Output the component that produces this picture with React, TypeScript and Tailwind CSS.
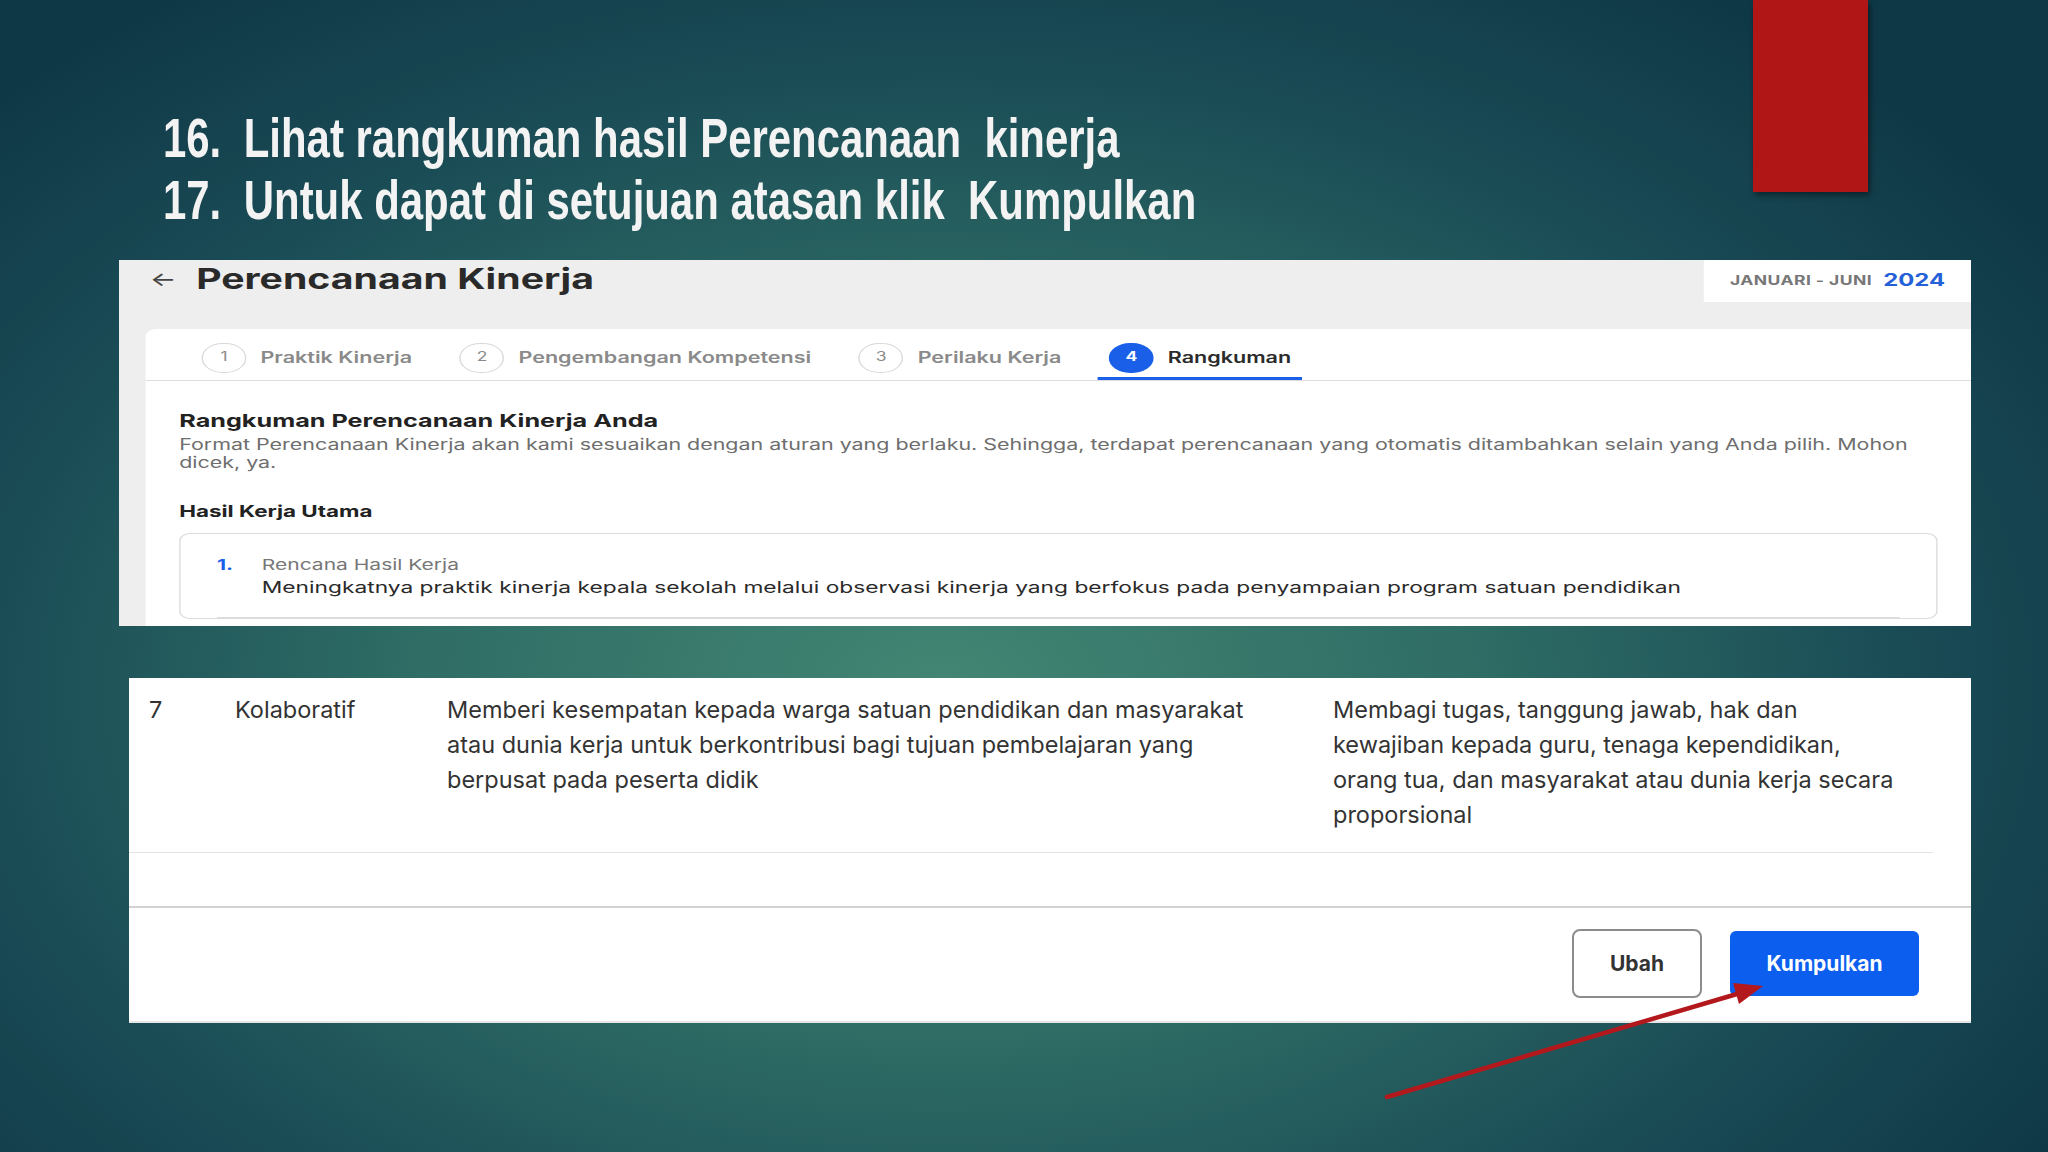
import React from 'react';

const tabs = [
  { n: '1', label: 'Praktik Kinerja' },
  { n: '2', label: 'Pengembangan Kompetensi' },
  { n: '3', label: 'Perilaku Kerja' },
  { n: '4', label: 'Rangkuman', active: true },
];

function StepTab({ n, label, active }: { n: string; label: string; active?: boolean }) {
  return (
    <div
      className={`flex h-full items-center gap-[10px] border-b-[3px] px-2 pt-[9px] ${
        active ? 'border-[#1a5fe8]' : 'border-transparent'
      }`}
    >
      <div
        className={`flex h-[30px] w-[32px] items-center justify-center rounded-full text-[12.5px] ${
          active
            ? 'bg-[#1a5fe8] font-bold text-white'
            : 'border border-[#d9d9d9] text-[#8a8a8a]'
        }`}
      >
        {n}
      </div>
      <span
        className={`text-[15.4px] font-semibold ${active ? 'text-[#2b2b2b]' : 'text-[#8a8a8a]'}`}
      >
        {label}
      </span>
    </div>
  );
}

function PlanningPanel() {
  return (
    <div className="ml-[119px] mt-[29px] h-[366px] w-[1852px] overflow-hidden bg-[#eeeeee]">
      {/* the screenshot is stretched sideways on the slide */}
      <div className="w-[1323px] origin-left scale-x-[1.4] font-['Inter',sans-serif]">
        <div className="flex h-[69px] items-start justify-between">
          <div className="flex h-[38px] items-center gap-[14px] pl-[22px]">
            <span className="text-[20px] leading-none text-[#444]">←</span>
            <h1 className="text-[28px] font-bold text-[#2a2a2a]">Perencanaan Kinerja</h1>
          </div>
          <div className="flex h-[42px] w-[191px] items-center justify-center gap-[8px] bg-white">
            <span className="text-[12.5px] font-bold tracking-wide text-[#777]">JANUARI - JUNI</span>
            <span className="text-[17px] font-bold text-[#2460d8]">2024</span>
          </div>
        </div>

        <div className="ml-[19px] h-[297px] rounded-tl-lg bg-white">
          <div className="flex h-[52px] items-stretch gap-[18px] border-b border-[#dddddd] pl-[32px]">
            {tabs.map((t) => (
              <StepTab key={t.n} {...t} />
            ))}
          </div>

          <div className="px-[24px] pt-[29px]">
            <h2 className="text-[18px] font-bold leading-[22px] text-[#222]">
              Rangkuman Perencanaan Kinerja Anda
            </h2>
            <p className="mt-[4px] text-[15.3px] leading-[18px] text-[#6e6e6e]">
              Format Perencanaan Kinerja akan kami sesuaikan dengan aturan yang berlaku. Sehingga,
              terdapat perencanaan yang otomatis ditambahkan selain yang Anda pilih. Mohon dicek, ya.
            </p>
            <h3 className="mt-[29px] text-[16px] font-bold leading-[20px] text-[#222]">
              Hasil Kerja Utama
            </h3>
            <div className="mt-[12px] rounded-lg border border-[#dcdcdc] px-[26px] pt-[22px]">
              <div className="flex border-b border-[#dcdcdc] pb-[20px]">
                <span className="w-[32px] text-[15px] font-bold leading-[18px] text-[#1a5fe8]">1.</span>
                <div>
                  <div className="text-[15px] leading-[18px] text-[#777]">Rencana Hasil Kerja</div>
                  <div className="mt-[3px] text-[16.25px] leading-[20px] text-[#2a2a2a]">
                    Meningkatnya praktik kinerja kepala sekolah melalui observasi kinerja yang berfokus
                    pada penyampaian program satuan pendidikan
                  </div>
                </div>
              </div>
            </div>
          </div>
        </div>
      </div>
    </div>
  );
}

function SummaryPanel() {
  return (
    <div className="ml-[129px] mt-[52px] h-[345px] w-[1842px] border-b-2 border-[#e6e6e6] bg-white font-['Inter',sans-serif] text-[#333]">
      <div className="mr-[38px] flex h-[175px] border-b border-[#e3e3e3] pl-[20px] pt-[14px] text-[23.5px] leading-[35px]">
        <div className="w-[86px] shrink-0">7</div>
        <div className="w-[212px] shrink-0">Kolaboratif</div>
        <div className="w-[886px] shrink-0">
          Memberi kesempatan kepada warga satuan pendidikan dan masyarakat
          <br />
          atau dunia kerja untuk berkontribusi bagi tujuan pembelajaran yang
          <br />
          berpusat pada peserta didik
        </div>
        <div className="flex-1 whitespace-nowrap">
          Membagi tugas, tanggung jawab, hak dan
          <br />
          kewajiban kepada guru, tenaga kependidikan,
          <br />
          orang tua, dan masyarakat atau dunia kerja secara
          <br />
          proporsional
        </div>
      </div>
      <div className="mt-[53px] flex justify-end gap-[28px] border-t-2 border-[#d2d2d2] pr-[52px] pt-[21px]">
        <button className="flex h-[69px] w-[130px] items-center justify-center rounded-lg border-2 border-[#8c8c8c] bg-white text-[21px] font-bold text-[#333]">
          Ubah
        </button>
        <button className="mt-[2px] flex h-[65px] w-[189px] items-center justify-center rounded-md bg-[#0b5eee] text-[21px] font-bold text-white">
          Kumpulkan
        </button>
      </div>
    </div>
  );
}

export default function App() {
  return (
    <div className="relative h-[1152px] w-[2048px] overflow-hidden bg-[radial-gradient(ellipse_64%_74%_at_46%_60%,#428673_0%,#2f6d65_40%,#1a4c56_73%,#0f3846_100%)]">
      <div className="absolute left-[1753px] top-0 h-[192px] w-[115px] bg-[#b01616] shadow-[2px_3px_6px_rgba(0,0,0,0.45)]" />

      {/* slide heading, narrow bold face */}
      <div className="pl-[163px] pt-[107px]">
        <div className="w-[1400px] origin-left scale-x-[0.762] font-['Liberation_Sans','Arial',sans-serif] text-[55px] font-bold leading-[62px] text-[#f3f3f3]">
          <div className="flex whitespace-pre">
            <span className="w-[106px] shrink-0">16.</span>
            <span>Lihat rangkuman hasil Perencanaan  kinerja</span>
          </div>
          <div className="flex whitespace-pre">
            <span className="w-[106px] shrink-0">17.</span>
            <span>Untuk dapat di setujuan atasan klik  Kumpulkan</span>
          </div>
        </div>
      </div>

      <PlanningPanel />
      <SummaryPanel />

      <svg className="pointer-events-none absolute left-0 top-0" width="2048" height="1152">
        <line x1="1387" y1="1097" x2="1737" y2="994" stroke="#b3191c" strokeWidth="4.5" strokeLinecap="round" />
        <polygon points="1763,986 1739,1004 1733,983" fill="#b3191c" />
      </svg>
    </div>
  );
}
